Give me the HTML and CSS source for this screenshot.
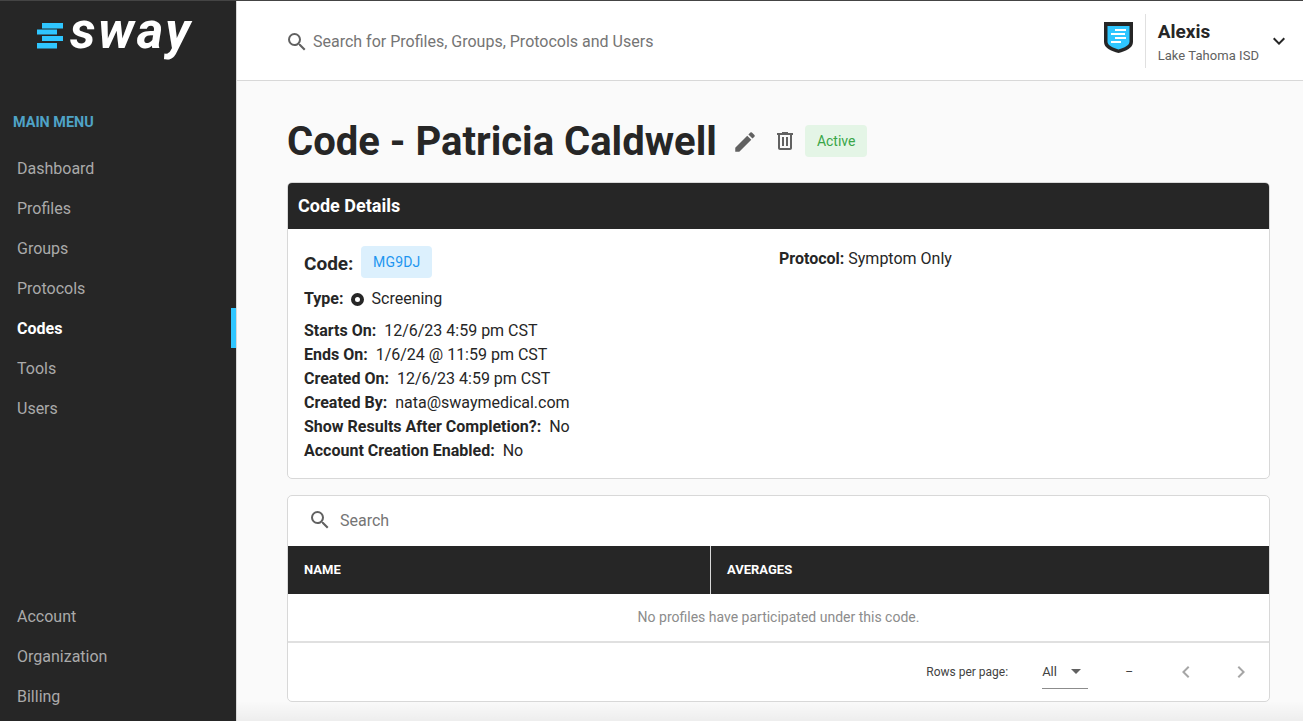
FILE: index.html
```html
<!DOCTYPE html>
<html lang="en">
<head>
  <meta charset="UTF-8">
  <meta name="viewport" content="width=device-width, initial-scale=1.0">
  <title>Code - Patricia Caldwell</title>
  <link rel="stylesheet" href="styles.css">
</head>
<body>
  <div class="app">
    <aside class="sidebar">
      <div class="logo">
        <svg class="logo-mark" width="27" height="26" viewBox="0 0 27 26">
          <path fill="#2fc6ff" d="M5 0h21v5.500H5zM0 6.500h20v5H0zM5 13h21v5H5zM0 20h20v5.500H0z"/>
        </svg>
        <span class="logo-text">sway</span>
      </div>
      <div class="menu-title">MAIN MENU</div>
      <nav class="menu">
        <a>Dashboard</a>
        <a>Profiles</a>
        <a>Groups</a>
        <a>Protocols</a>
        <a class="active">Codes</a>
        <a>Tools</a>
        <a>Users</a>
      </nav>
      <nav class="menu menu-bottom">
        <a>Account</a>
        <a>Organization</a>
        <a>Billing</a>
      </nav>
    </aside>

    <div class="content">
      <header class="topbar">
        <svg class="search-icon" width="24" height="24" viewBox="0 0 24 24">
          <path fill="#616161" d="M15.500 14h-.79l-.28-.27A6.470 6.470 0 0 0 16 9.500 6.500 6.500 0 1 0 9.500 16c1.610 0 3.090-.59 4.230-1.570l.27.28v.79l5 4.990L20.490 19l-4.990-5zm-6 0C7.010 14 5 11.990 5 9.500S7.010 5 9.500 5 14 7.010 14 9.500 11.990 14 9.500 14z"/>
        </svg>
        <span class="top-search">Search for Profiles, Groups, Protocols and Users</span>
        <svg class="shield" width="29" height="31" viewBox="0 0 29 31">
          <path fill="#262626" d="M0 0h29v20c0 6-7 9-14.500 11C7 29 0 26 0 20z"/>
          <path fill="#2fc6ff" d="M3.500 4h22v15.500c0 4-5 6-11 8-6-2-11-4-11-8z"/>
          <path fill="#fff" d="M11 7h11v2H11zM7 11h14v2H7zM11 15h11v2H11zM7 19h10v2H7z"/>
        </svg>
        <div class="user">
          <div class="user-name">Alexis</div>
          <div class="user-org">Lake Tahoma ISD</div>
        </div>
        <svg class="chevron" width="24" height="24" viewBox="0 0 24 24">
          <path fill="#262626" d="M7.410 8.590 12 13.170l4.590-4.580L18 10l-6 6-6-6z"/>
        </svg>
      </header>

      <main class="page">
        <div class="title-row">
          <h1>Code - Patricia Caldwell</h1>
          <svg class="edit-icon" width="26" height="26" viewBox="0 0 24 24">
            <path fill="#616161" d="M3 17.250V21h3.750L17.810 9.940l-3.750-3.750L3 17.250zM20.710 7.040a1 1 0 0 0 0-1.410l-2.340-2.340a1 1 0 0 0-1.410 0l-1.830 1.830 3.750 3.750 1.830-1.830z"/>
          </svg>
          <svg class="trash-icon" width="24" height="24" viewBox="0 0 24 24">
            <path fill="#616161" d="M15 4V3H9v1H4v2h1v13c0 1.100.9 2 2 2h10c1.100 0 2-.9 2-2V6h1V4h-5zm2 15H7V6h10v13zM9 8h2v9H9zm4 0h2v9h-2z"/>
          </svg>
          <span class="status">Active</span>
        </div>

        <section class="card details">
          <div class="card-head">Code Details</div>
          <div class="details-body">
            <div class="details-left">
              <div class="code-row">
                <b>Code:</b>
                <span class="code-chip">MG9DJ</span>
              </div>
              <div class="type-row">
                <b>Type:</b>
                <span class="ring"></span>
                <span>Screening</span>
              </div>
              <div class="info-list">
                <div><b>Starts On:</b> 12/6/23 4:59 pm CST</div>
                <div><b>Ends On:</b> 1/6/24 @ 11:59 pm CST</div>
                <div><b>Created On:</b> 12/6/23 4:59 pm CST</div>
                <div><b>Created By:</b> nata@swaymedical.com</div>
                <div><b>Show Results After Completion?:</b> No</div>
                <div><b>Account Creation Enabled:</b> No</div>
              </div>
            </div>
            <div class="details-right"><b>Protocol:</b> Symptom Only</div>
          </div>
        </section>

        <section class="card results">
          <div class="table-search">
            <svg width="24" height="24" viewBox="0 0 24 24">
              <path fill="#616161" d="M15.500 14h-.79l-.28-.27A6.470 6.470 0 0 0 16 9.500 6.500 6.500 0 1 0 9.500 16c1.610 0 3.090-.59 4.230-1.570l.27.28v.79l5 4.990L20.490 19l-4.990-5zm-6 0C7.010 14 5 11.990 5 9.500S7.010 5 9.500 5 14 7.010 14 9.500 11.990 14 9.500 14z"/>
            </svg>
            <span>Search</span>
          </div>
          <div class="table-head">
            <div class="col-name">NAME</div>
            <div class="col-avg">AVERAGES</div>
          </div>
          <div class="table-empty">No profiles have participated under this code.</div>
          <div class="table-foot">
            <span class="rows-label">Rows per page:</span>
            <span class="rows-select">All
              <svg width="10" height="5" viewBox="0 0 10 5"><path fill="#616161" d="M0 0h10L5 5z"/></svg>
            </span>
            <span class="range">–</span>
            <svg class="pager" width="24" height="24" viewBox="0 0 24 24">
              <path fill="#a6a6a6" d="M15.410 7.410 14 6l-6 6 6 6 1.410-1.410L10.830 12z"/>
            </svg>
            <svg class="pager" width="24" height="24" viewBox="0 0 24 24">
              <path fill="#a6a6a6" d="M8.590 16.590 10 18l6-6-6-6-1.410 1.410L13.170 12z"/>
            </svg>
          </div>
        </section>
      </main>
    </div>
  </div>
</body>
</html>
```

FILE: styles.css
```css
* {
  box-sizing: border-box;
}
html, body {
  height: 100%;
}
body {
  margin: 0;
  font-family: Roboto, sans-serif;
  color: #262626;
  background: #fafafa;
  overflow: hidden;
}
.app {
  display: flex;
  height: 721px;
  border-top: 1px solid #444;
}
.sidebar {
  width: 237px;
  flex-shrink: 0;
  display: flex;
  flex-direction: column;
  background: #262626;
  border-right: 1px solid #d8d8d8;
}
.logo {
  display: flex;
  align-items: flex-start;
  gap: 6px;
  height: 70px;
  padding: 22px 0 0 37px;
}
.logo-mark {
  flex-shrink: 0;
}
.logo-text {
  margin-top: -22px;
  font-style: italic;
  font-weight: 700;
  font-size: 51px;
  line-height: 60px;
  color: #fff;
  letter-spacing: 2.500px;
}
.menu-title {
  margin-top: 42px;
  padding-left: 13px;
  font-size: 14.4px;
  line-height: 20px;
  font-weight: 700;
  color: #4fa3c7;
}
.menu {
  margin-top: 15px;
}
.menu a {
  display: block;
  height: 40px;
  padding-left: 17px;
  font-size: 16px;
  line-height: 42px;
  color: #aaa;
}
.menu a.active {
  font-weight: 700;
  color: #fff;
  border-right: 5px solid #2fc6ff;
}
.menu-bottom {
  margin-top: auto;
  margin-bottom: 5px;
}
.content {
  flex: 1;
  min-width: 0;
  position: relative;
}
.content::after {
  content: "";
  position: absolute;
  left: 0;
  right: 0;
  bottom: 0;
  height: 20px;
  background: linear-gradient(rgba(0, 0, 0, 0), rgba(0, 0, 0, 0.05));
  pointer-events: none;
}
.topbar {
  display: flex;
  align-items: center;
  height: 80px;
  padding-left: 48px;
  background: #fff;
  border-bottom: 1px solid #d8d8d8;
}
.search-icon {
  margin-top: 2px;
}
.top-search {
  margin: 2px 0 0 4px;
  font-size: 16px;
  color: #757575;
}
.shield {
  margin-left: auto;
  margin-bottom: 6px;
}
.user {
  margin-left: 12px;
  padding-left: 12px;
  height: 54px;
  border-left: 1px solid #e0e0e0;
}
.user-name {
  margin-top: 6px;
  font-size: 19px;
  line-height: 24px;
  font-weight: 700;
}
.user-org {
  margin-top: 2px;
  font-size: 13px;
  letter-spacing: 0.05px;
  line-height: 20px;
  color: #616161;
}
.chevron {
  margin: 0 12px 0 8px;
}
.page {
  padding: 0 33px 0 50px;
}
.title-row {
  display: flex;
  align-items: center;
  height: 101px;
  padding-top: 18px;
}
h1 {
  margin: 2px 0 0;
  font-size: 40px;
  line-height: 48px;
  font-weight: 700;
}
.edit-icon {
  margin: 2px 0 0 15px;
}
.trash-icon {
  margin-left: 15px;
}
.status {
  margin-left: 8px;
  padding: 0 12px;
  height: 32px;
  border-radius: 4px;
  background: #e4f5e6;
  color: #3aa648;
  font-size: 14px;
  line-height: 32px;
}
.card {
  background: #fff;
  border: 1px solid #d8d8d8;
  border-radius: 5px;
  overflow: hidden;
}
.details {
  height: 297px;
}
.card-head {
  height: 46px;
  padding-left: 10px;
  background: #262626;
  color: #fff;
  font-size: 18px;
  font-weight: 700;
  line-height: 45px;
}
.details-body {
  display: flex;
  padding: 17px 16px 0;
  font-size: 16px;
  line-height: 24px;
}
.details-left {
  width: 475px;
}
.details-left b, .details-right b {
  font-weight: 700;
}
.info-list b {
  margin-right: 4px;
}
.code-row {
  display: flex;
  align-items: center;
  gap: 8px;
  font-size: 19px;
}
.code-chip {
  height: 32px;
  padding: 0 11.500px;
  border-radius: 4px;
  background: #dcf0fd;
  color: #1e96f0;
  font-size: 14px;
  letter-spacing: 0.2px;
  line-height: 32px;
  margin-bottom: 4px;
}
.type-row {
  display: flex;
  align-items: center;
  margin-top: 5px;
}
.ring {
  width: 13px;
  height: 13px;
  margin: 0 8px 0 7px;
  border: 4px solid #262626;
  border-radius: 50%;
}
.info-list {
  margin-top: 8px;
}
.details-right {
  margin-top: 1px;
}
.results {
  margin-top: 16px;
  height: 207px;
}
.table-search {
  display: flex;
  align-items: center;
  gap: 8px;
  height: 50px;
  padding: 0 0 2px 20px;
  color: #757575;
  font-size: 16px;
}
.table-head {
  display: flex;
  height: 48px;
  background: #262626;
  color: #fff;
  font-size: 13px;
  font-weight: 700;
  line-height: 48px;
}
.col-name {
  width: 423px;
  padding-left: 16px;
  border-right: 1px solid #d8d8d8;
}
.col-avg {
  padding-left: 16px;
}
.table-empty {
  height: 49px;
  text-align: center;
  font-size: 14px;
  line-height: 46px;
  color: #8c8c8c;
  border-bottom: 2px solid #e0e0e0;
}
.table-foot {
  display: flex;
  align-items: center;
  height: 58px;
  justify-content: flex-end;
  padding-right: 16px;
  font-size: 12px;
  color: #424242;
}
.rows-select {
  display: flex;
  align-items: center;
  justify-content: space-between;
  width: 46px;
  height: 34px;
  margin-left: 34px;
  padding-right: 7px;
  border-bottom: 1px solid #8c8c8c;
  font-size: 13px;
}
.range {
  margin-left: 37px;
  margin-right: 41px;
}
.pager + .pager {
  margin-left: 31px;
}
```
